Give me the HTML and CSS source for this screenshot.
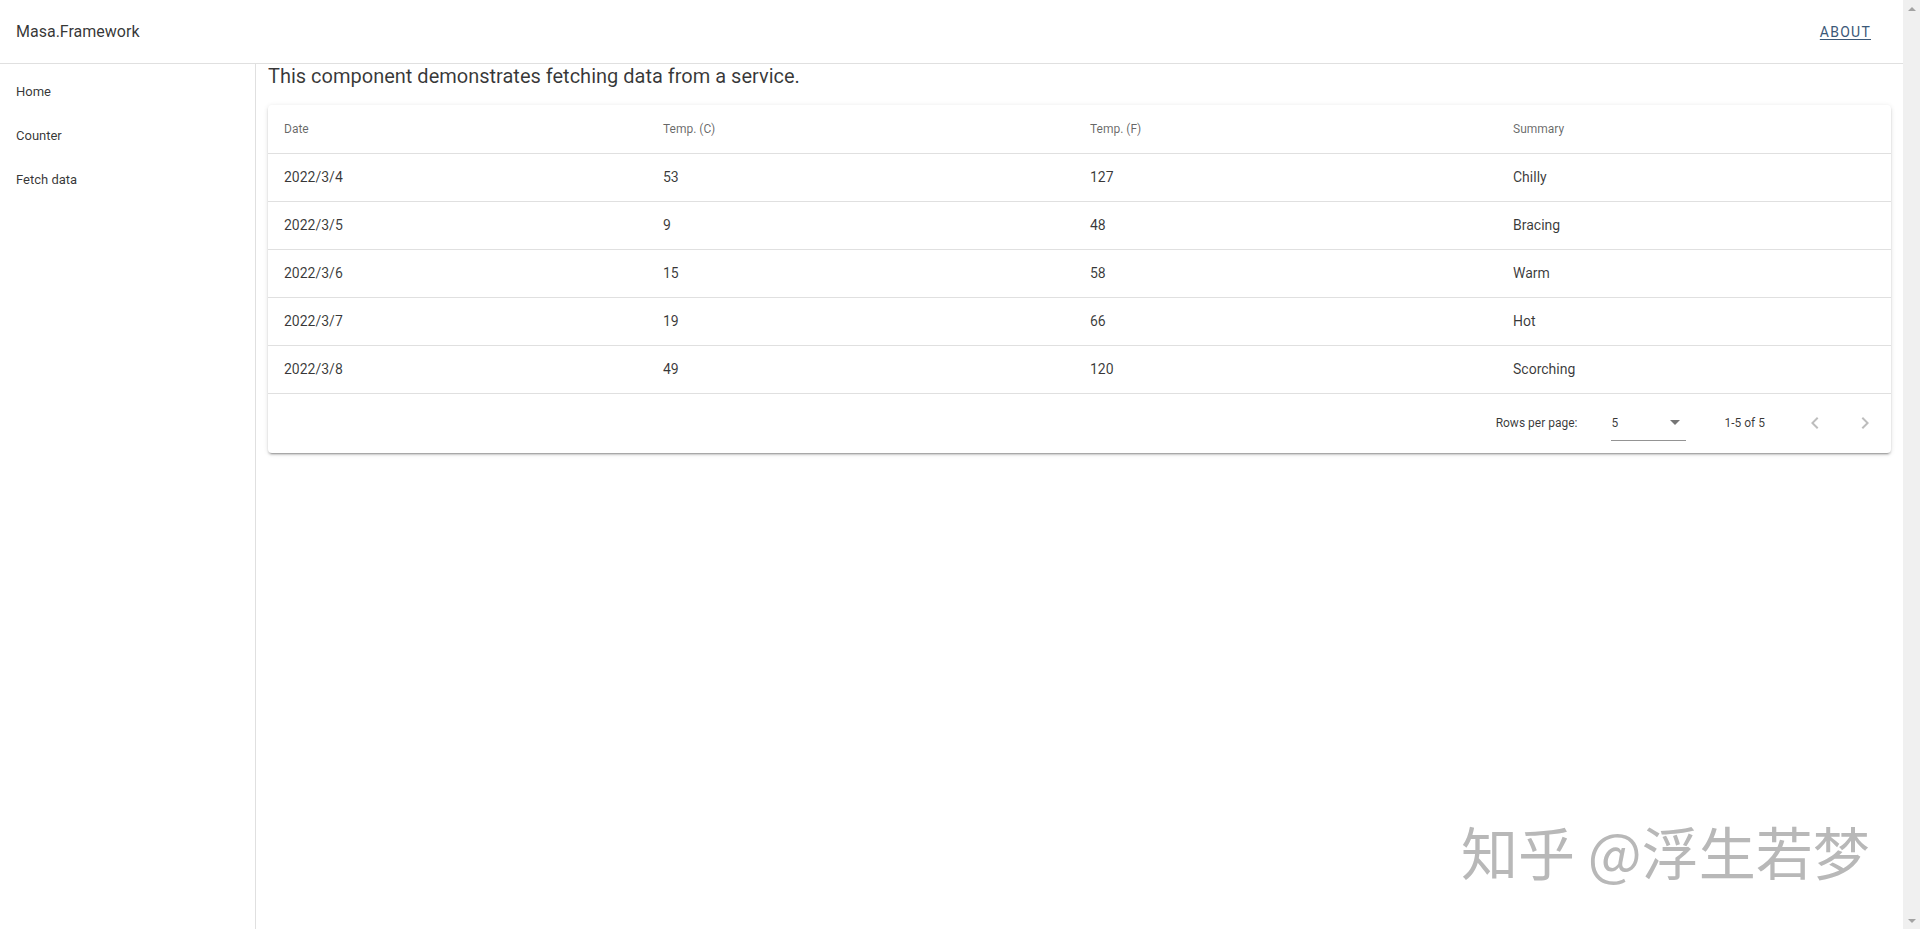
FILE: index.html
```html
<!DOCTYPE html>
<html lang="en">
<head>
<meta charset="utf-8">
<title>Masa.Framework</title>
<link rel="stylesheet" href="styles.css">
</head>
<body>
<div class="app">
  <header class="topbar">
    <div class="brand">Masa.Framework</div>
    <a class="about" href="#">About</a>
  </header>
  <div class="layout">
    <nav class="sidebar">
      <a class="nav-item" href="#">Home</a>
      <a class="nav-item" href="#">Counter</a>
      <a class="nav-item" href="#">Fetch data</a>
    </nav>
    <main class="main">
      <p class="intro">This component demonstrates fetching data from a service.</p>
      <div class="card">
        <table class="grid">
          <colgroup>
            <col class="c1"><col class="c2"><col class="c3"><col class="c4">
          </colgroup>
          <thead>
            <tr><th>Date</th><th>Temp. (C)</th><th>Temp. (F)</th><th>Summary</th></tr>
          </thead>
          <tbody>
            <tr><td>2022/3/4</td><td>53</td><td>127</td><td>Chilly</td></tr>
            <tr><td>2022/3/5</td><td>9</td><td>48</td><td>Bracing</td></tr>
            <tr><td>2022/3/6</td><td>15</td><td>58</td><td>Warm</td></tr>
            <tr><td>2022/3/7</td><td>19</td><td>66</td><td>Hot</td></tr>
            <tr><td>2022/3/8</td><td>49</td><td>120</td><td>Scorching</td></tr>
          </tbody>
        </table>
        <div class="footer">
          <span class="rpp">Rows per page:</span>
          <div class="select"><span>5</span><span class="caret"></span></div>
          <span class="range">1-5 of 5</span>
          <button class="pg-btn first" disabled aria-label="Previous page">
            <svg viewBox="0 0 24 24" width="24" height="24"><path d="M15.41,16.58L10.83,12L15.41,7.41L14,6L8,12L14,18L15.41,16.58Z"/></svg>
          </button>
          <button class="pg-btn" disabled aria-label="Next page">
            <svg viewBox="0 0 24 24" width="24" height="24"><path d="M8.59,16.58L13.17,12L8.59,7.41L10,6L16,12L10,18L8.59,16.58Z"/></svg>
          </button>
        </div>
      </div>
    </main>
  </div>
</div>
<div class="scrollbar">
  <span class="arrow-up"></span>
  <span class="arrow-down"></span>
</div>
<div class="watermark">知乎 @浮生若梦</div>
</body>
</html>
```
FILE: styles.css
```css
* { box-sizing: border-box; }
html, body { margin: 0; padding: 0; }
body {
  height: 929px;
  overflow: hidden;
  display: flex;
  font-family: Roboto, "Liberation Sans", sans-serif;
  color: rgba(0,0,0,.87);
  background: #fff;
  position: relative;
}
.app {
  flex: 1;
  display: flex;
  flex-direction: column;
  min-width: 0;
}
.topbar {
  height: 64px;
  flex: none;
  border-bottom: 1px solid #e0e0e0;
  display: flex;
  align-items: center;
  justify-content: space-between;
  padding: 0 32px 0 16px;
}
.brand {
  font-size: 16px;
  color: rgba(0,0,0,.8);
  padding-bottom: 1px;
}
.about {
  font-size: 14px;
  text-transform: uppercase;
  letter-spacing: 1.25px;
  color: #3b5878;
  text-decoration: underline;
  text-underline-offset: 2px;
}
.layout {
  flex: 1;
  display: flex;
  min-height: 0;
}
.sidebar {
  width: 256px;
  flex: none;
  border-right: 1px solid #e0e0e0;
  padding-top: 5px;
  display: flex;
  flex-direction: column;
}
.nav-item {
  height: 44px;
  display: flex;
  align-items: center;
  padding-left: 16px;
  font-size: 13px;
  color: rgba(0,0,0,.8);
  text-decoration: none;
}
.main {
  flex: 1;
  padding: 0 12px;
  min-width: 0;
}
.intro {
  margin: 0 0 17px;
  font-size: 20px;
  line-height: 24px;
  color: rgba(0,0,0,.78);
}
.card {
  background: #fff;
  border-radius: 4px;
  box-shadow: 0 3px 1px -2px rgba(0,0,0,.2), 0 2px 2px 0 rgba(0,0,0,.14), 0 1px 5px 0 rgba(0,0,0,.12);
}
.grid {
  width: 100%;
  border-collapse: collapse;
  table-layout: fixed;
}
.c1 { width: 379px; }
.c2 { width: 427px; }
.c3 { width: 423px; }
.c4 { width: 394px; }
.grid th {
  height: 48px;
  padding: 0 16px;
  text-align: left;
  font-size: 12px;
  font-weight: 400;
  color: rgba(0,0,0,.6);
  border-bottom: 1px solid rgba(0,0,0,.12);
}
.grid td {
  height: 48px;
  padding: 0 16px;
  font-size: 14px;
  color: rgba(0,0,0,.78);
  border-bottom: 1px solid rgba(0,0,0,.12);
}
.footer {
  height: 59px;
  display: flex;
  align-items: center;
  justify-content: flex-end;
  padding: 0 8px;
  font-size: 12px;
  color: rgba(0,0,0,.78);
}
.select {
  width: 75px;
  height: 36px;
  margin-left: 34px;
  display: flex;
  align-items: center;
  justify-content: space-between;
  padding-right: 6px;
  border-bottom: 1px solid rgba(0,0,0,.42);
  font-size: 12px;
}
.caret {
  width: 0;
  height: 0;
  border-left: 5px solid transparent;
  border-right: 5px solid transparent;
  border-top: 5px solid rgba(0,0,0,.54);
}
.range { margin-left: 38px; }
.pg-btn {
  width: 36px;
  height: 36px;
  margin-left: 14px;
  padding: 0;
  border: 0;
  background: none;
  display: flex;
  align-items: center;
  justify-content: center;
  fill: rgba(0,0,0,.26);
}
.pg-btn.first { margin-left: 32px; }
.scrollbar {
  width: 17px;
  flex: none;
  background: #f0f0f0;
  display: flex;
  flex-direction: column;
  justify-content: space-between;
  align-items: center;
  padding: 7px 0 6px;
}
.arrow-up {
  width: 0; height: 0;
  border-left: 4px solid transparent;
  border-right: 4px solid transparent;
  border-bottom: 4px solid #a3a3a3;
}
.arrow-down {
  width: 0; height: 0;
  border-left: 4px solid transparent;
  border-right: 4px solid transparent;
  border-top: 4px solid #a3a3a3;
}
.watermark {
  position: absolute;
  left: 1461px;
  top: 822px;
  font-family: "Noto Sans CJK SC", sans-serif;
  font-size: 57px;
  line-height: 1;
  color: #b8b8b8;
  text-shadow: 1px 1px 0 #fff;
  white-space: nowrap;
  pointer-events: none;
}
```
